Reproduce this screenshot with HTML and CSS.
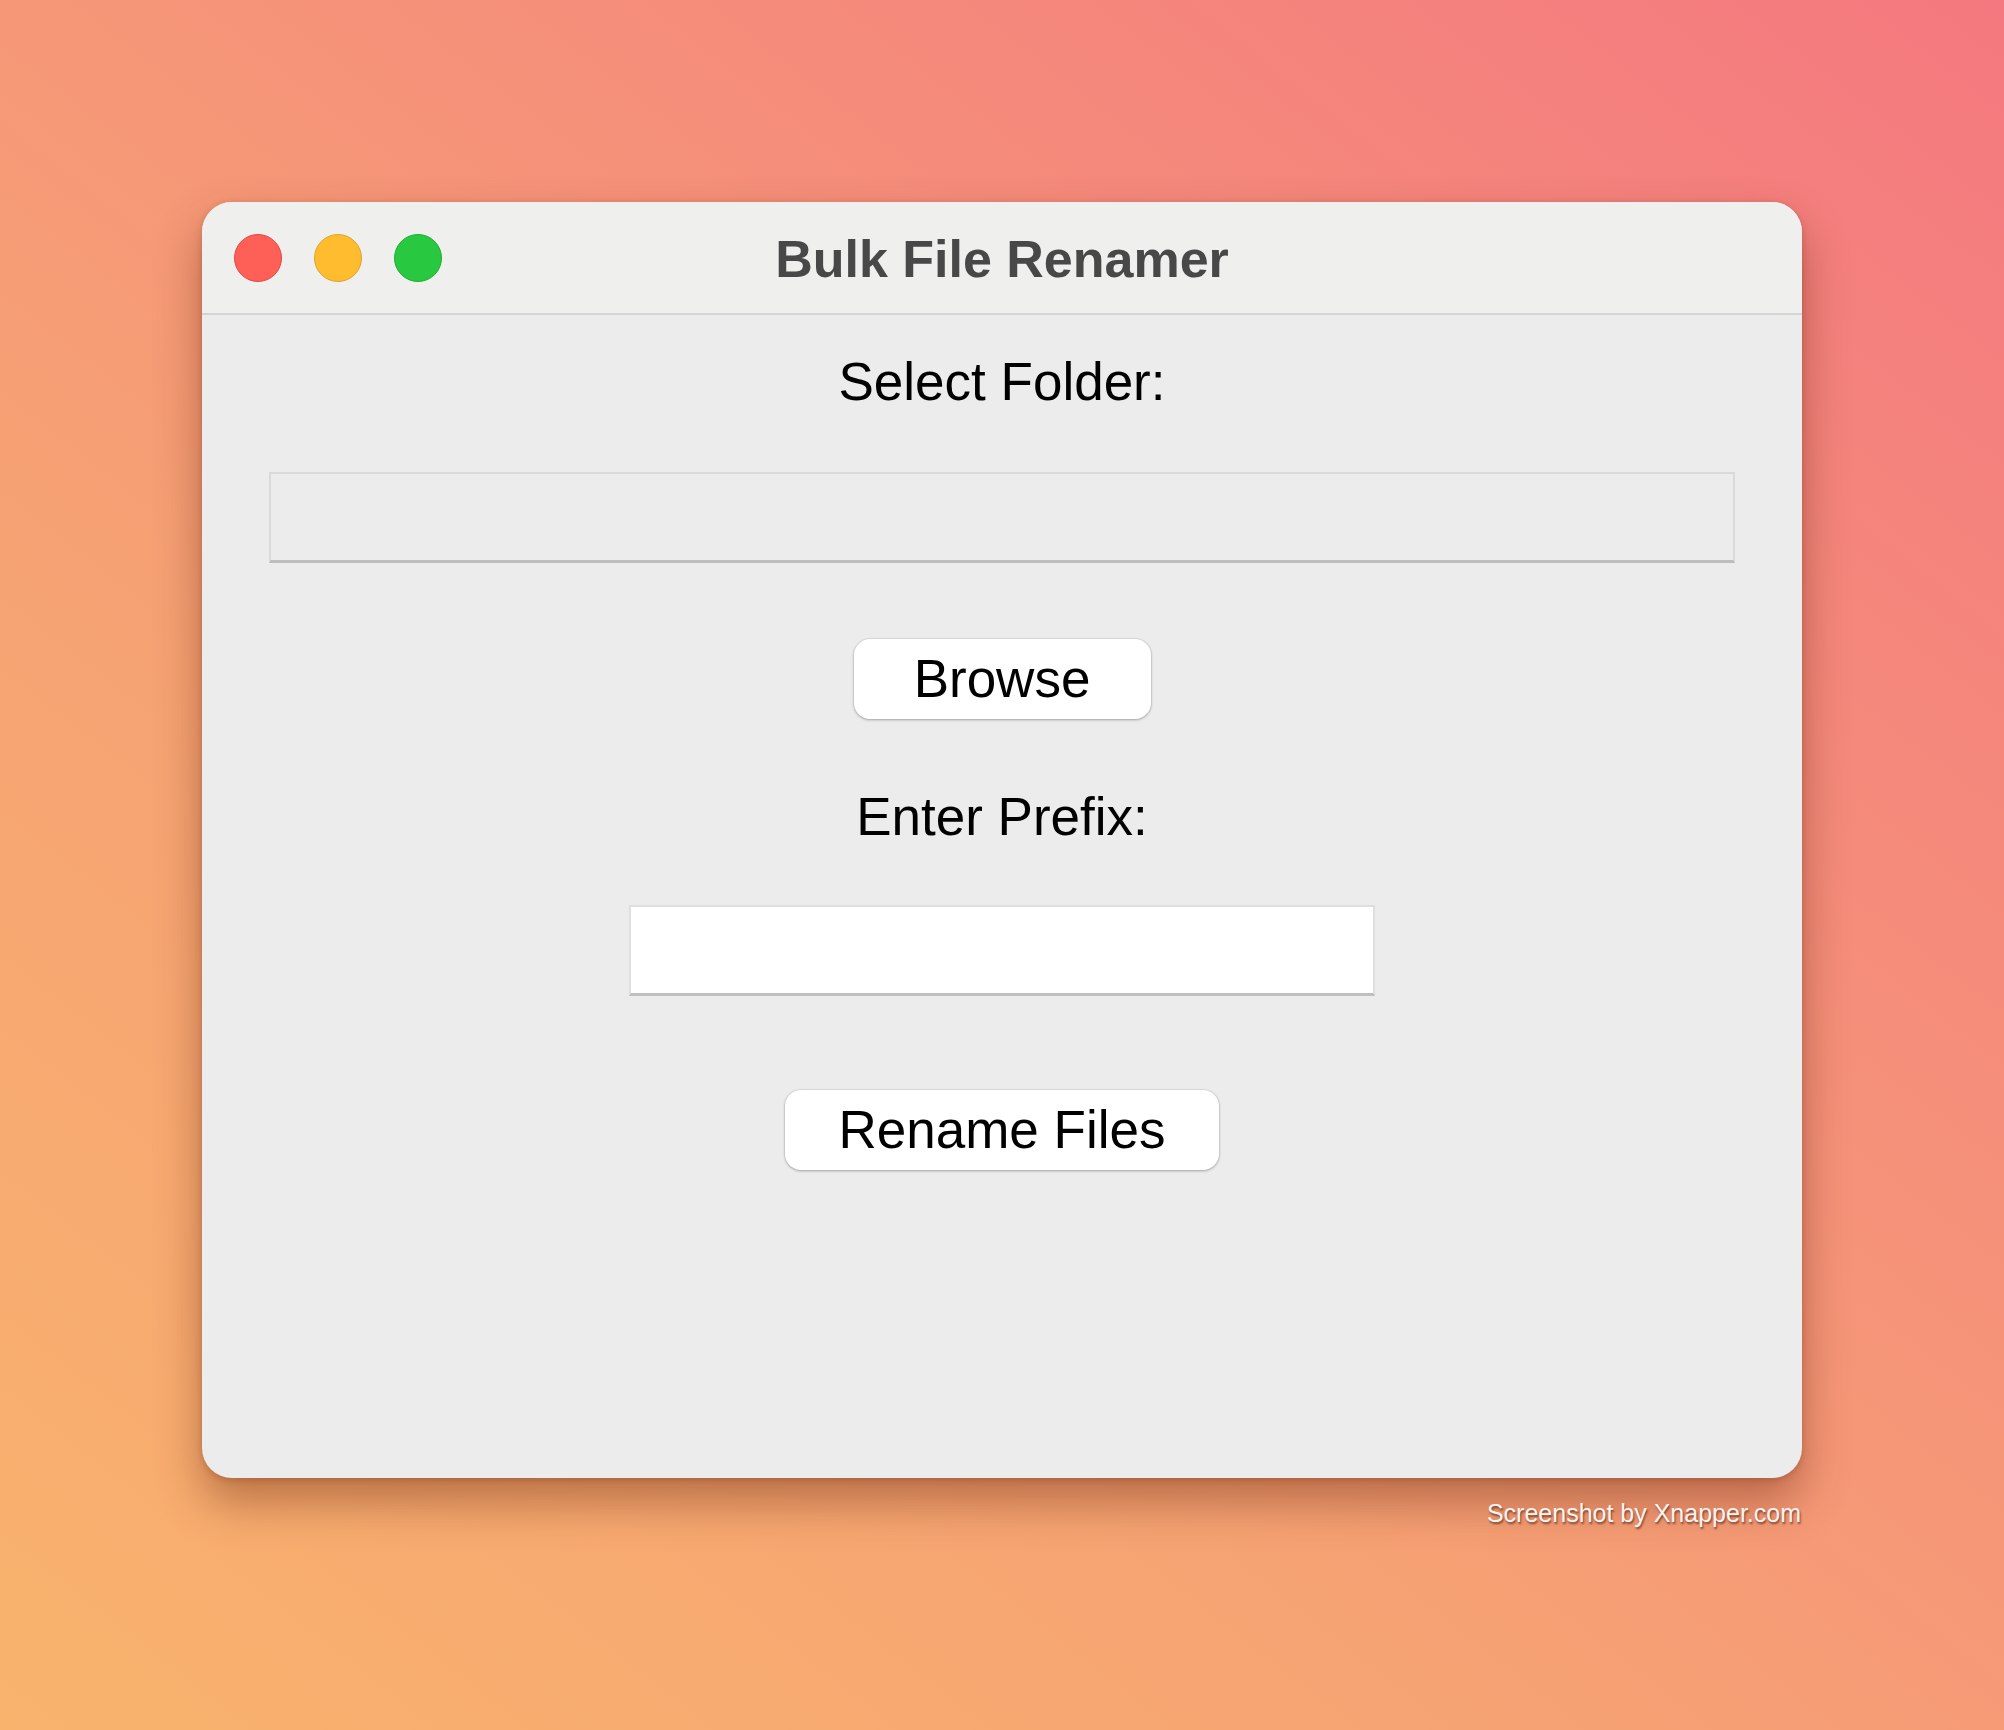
FILE: index.html
```html
<!DOCTYPE html>
<html lang="en">
<head>
<meta charset="utf-8">
<title>Bulk File Renamer</title>
<link rel="stylesheet" href="styles.css">
</head>
<body>
<div class="stage">
  <div class="window">
    <div class="titlebar">
      <div class="lights">
        <span class="light red"></span>
        <span class="light yellow"></span>
        <span class="light green"></span>
      </div>
      <div class="title">Bulk File Renamer</div>
      <div class="spacer"></div>
    </div>
    <div class="content">
      <div class="label label-folder">Select Folder:</div>
      <div class="field field-folder"></div>
      <div class="btn btn-browse">Browse</div>
      <div class="label label-prefix">Enter Prefix:</div>
      <div class="field field-prefix"></div>
      <div class="btn btn-rename">Rename Files</div>
    </div>
  </div>
  <div class="credit">Screenshot by Xnapper.com</div>
</div>
</body>
</html>
```

FILE: styles.css
```css
* { box-sizing: border-box; }

html, body {
  margin: 0;
  padding: 0;
  width: 2004px;
  height: 1730px;
  overflow: hidden;
}

body {
  background: linear-gradient(38deg, #f9b36d 0%, #f6a373 35%, #f58f7a 65%, #f4787f 100%);
  font-family: "Liberation Sans", Arial, sans-serif;
}

.stage {
  width: 1600px;
  margin-left: 202px;
  padding-top: 202px;
  display: flex;
  flex-direction: column;
}

.window {
  width: 1600px;
  height: 1276px;
  background: #ececec;
  border-radius: 30px;
  overflow: hidden;
  box-shadow: 0 24px 46px rgba(110, 45, 20, 0.45), 0 2px 6px rgba(110, 45, 20, 0.25);
  display: flex;
  flex-direction: column;
}

.titlebar {
  height: 113px;
  flex: none;
  background: #efefed;
  border-bottom: 2px solid #d4d4d2;
  display: grid;
  grid-template-columns: 1fr auto 1fr;
  align-items: center;
}

.lights {
  display: flex;
  gap: 32px;
  padding-left: 32px;
  padding-top: 1px;
}

.light {
  width: 48px;
  height: 48px;
  border-radius: 50%;
  display: block;
}

.light.red { background: #fe5f57; border: 1px solid #e4493f; }
.light.yellow { background: #febc2e; border: 1px solid #e0a22a; }
.light.green { background: #28c840; border: 1px solid #1fae30; }

.title {
  font-weight: bold;
  font-size: 52px;
  line-height: 60px;
  color: #484848;
  text-align: center;
  padding-top: 2px;
}

.content {
  flex: 1;
  display: flex;
  flex-direction: column;
  align-items: center;
  padding-top: 37px;
}

.label {
  font-size: 53px;
  line-height: 60px;
  color: #000;
  text-align: center;
}

.field {
  height: 91px;
  border: 2px solid #d9d9d9;
  border-bottom: 3px solid #bdbdbd;
}

.field-folder {
  width: 1466px;
  margin-top: 60px;
  background: #ececec;
}

.field-prefix {
  width: 746px;
  margin-top: 58px;
  background: #ffffff;
  border-color: #dedede;
  border-bottom-color: #bfbfbf;
}

.btn {
  height: 80px;
  background: #ffffff;
  border-radius: 16px;
  box-shadow: 0 1px 3px rgba(0, 0, 0, 0.28), 0 0 0 1px rgba(0, 0, 0, 0.05);
  font-size: 53px;
  line-height: 60px;
  color: #000;
  display: flex;
  align-items: center;
  justify-content: center;
}

.btn-browse {
  width: 297px;
  margin-top: 76px;
}

.label-prefix {
  margin-top: 68px;
}

.btn-rename {
  width: 434px;
  margin-top: 94px;
}

.credit {
  align-self: flex-end;
  margin-top: 20px;
  margin-right: 1px;
  font-size: 25px;
  line-height: 30px;
  color: #fbf3ef;
  text-shadow: 1px 2px 2px rgba(60, 20, 10, 0.6);
}
```
